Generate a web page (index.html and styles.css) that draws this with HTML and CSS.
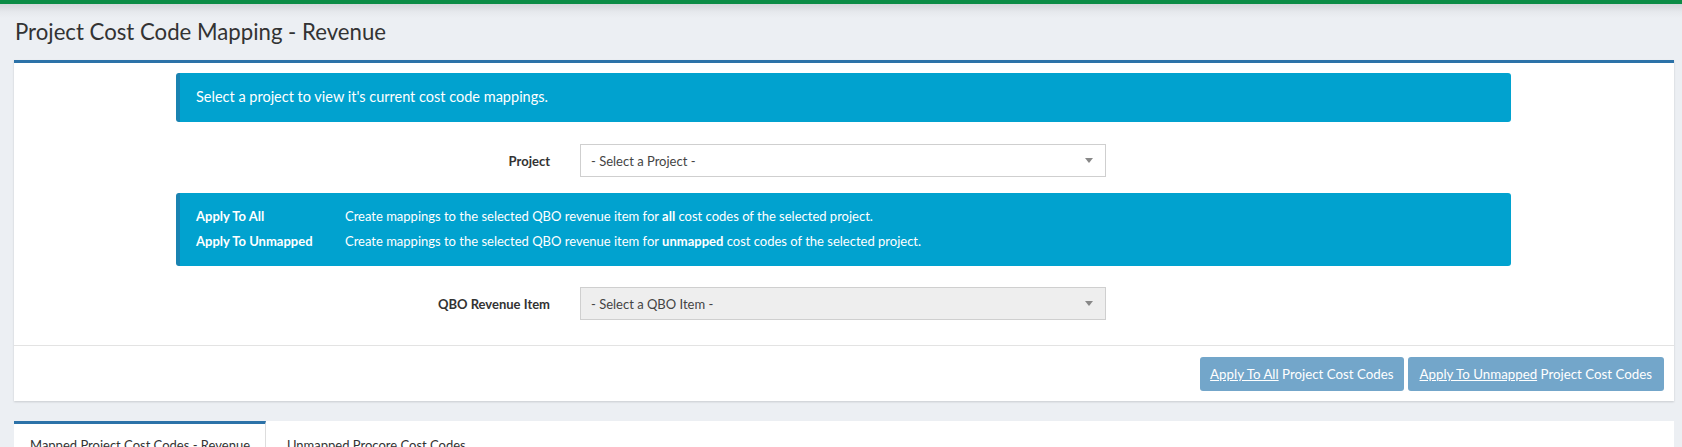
FILE: index.html
```html
<!DOCTYPE html>
<html>
<head>
<meta charset="utf-8">
<link rel="stylesheet" href="styles.css">
</head>
<body>
<div class="topbar"></div>
<div class="page-head">
  <h1 class="page-title">Project Cost Code Mapping - Revenue</h1>
</div>
<div class="panel">
  <div class="panel-body">
    <div class="callout callout-intro">Select a project to view it's current cost code mappings.</div>
    <div class="form-row">
      <label class="form-label">Project</label>
      <div class="select">
        <span>- Select a Project -</span>
        <span class="caret"></span>
      </div>
    </div>
    <div class="callout callout-list">
      <div class="callout-row"><span class="callout-term">Apply To All</span><span>Create mappings to the selected QBO revenue item for <b>all</b> cost codes of the selected project.</span></div>
      <div class="callout-row"><span class="callout-term">Apply To Unmapped</span><span>Create mappings to the selected QBO revenue item for <b>unmapped</b> cost codes of the selected project.</span></div>
    </div>
    <div class="form-row">
      <label class="form-label">QBO Revenue Item</label>
      <div class="select select-disabled">
        <span>- Select a QBO Item -</span>
        <span class="caret"></span>
      </div>
    </div>
  </div>
  <div class="panel-footer">
    <button class="btn"><u>Apply To All</u> Project Cost Codes</button>
    <button class="btn"><u>Apply To Unmapped</u> Project Cost Codes</button>
  </div>
</div>
<div class="tabs">
  <div class="tab tab-active">Mapped Project Cost Codes - Revenue</div>
  <div class="tab">Unmapped Procore Cost Codes</div>
</div>
</body>
</html>
```
FILE: styles.css
```css
* { box-sizing: border-box; }
html, body { margin: 0; padding: 0; }
body {
  background: #eceff3;
  font-family: Lato, "Open Sans", sans-serif;
  font-size: 14px;
  color: #333;
  overflow: hidden;
}
.topbar {
  height: 4px;
  background: #0b8c46;
}
.page-head {
  background: linear-gradient(#d3d6da, #e6e9ed 8px, #eceff3 14px);
  height: 56px;
  padding: 14px 0 0 15px;
}
.page-title {
  margin: 0;
  font-weight: 400;
  font-size: 22.2px;
  line-height: 28px;
  color: #333;
}
.panel {
  margin: 0 8px 0 14px;
  background: #fff;
  border-top: 3px solid #2c72a8;
  box-shadow: 0 1px 2px rgba(0,0,0,0.15);
}
.panel-body {
  padding: 10px 163px 25px 162px;
}
.callout {
  background: #01a2cf;
  border-left: 4px solid #1983b1;
  border-radius: 3px;
  color: #fff;
  padding: 14px 16px 15px;
  line-height: 20px;
  font-size: 13px;
}
.callout-intro { font-size: 14.5px; }
.callout-list {
  margin-top: 16px;
  padding: 11px 16px 12px;
  line-height: 25px;
}
.callout-row { display: flex; }
.callout-term { width: 149px; font-weight: 700; }
.callout b { font-weight: 700; }
.form-row {
  display: grid;
  grid-template-columns: 374px 526px;
  column-gap: 30px;
  align-items: center;
  margin-top: 22px;
}
.callout-list + .form-row { margin-top: 21px; }
.form-label {
  text-align: right;
  font-weight: 700;
  font-size: 13px;
}
.select {
  height: 33px;
  border: 1px solid #cfcfcf;
  background: #fff;
  display: flex;
  align-items: center;
  justify-content: space-between;
  padding: 0 10px 0 10px;
  font-size: 13px;
  color: #444;
}
.select-disabled { background: #eeeeee; }
.caret {
  width: 0; height: 0;
  border-left: 4px solid transparent;
  border-right: 4px solid transparent;
  border-top: 5px solid #888;
  margin-right: 2px;
}
.panel-footer {
  border-top: 1px solid #e3e3e3;
  display: flex;
  justify-content: flex-end;
  gap: 4px;
  padding: 11px 10px 10px;
}
.btn {
  height: 34px;
  border: 0;
  border-radius: 3px;
  background: #73a6ca;
  color: #fff;
  font-family: inherit;
  font-size: 13.3px;
  padding: 0 12px;
}
.btn:first-child { padding: 0 10px; }
.tabs {
  margin: 20px 8px 0 14px;
  background: #fff;
  display: flex;
  height: 40px;
}
.tab {
  padding: 13px 20px 0 16px;
  border-top: 3px solid transparent;
  font-size: 13px;
  color: #333;
  white-space: nowrap;
}
.tab-active {
  width: 252px;
  border-top-color: #2c72a8;
  border-right: 1px solid #dddddd;
}
.tab + .tab { padding-left: 21px; }
```
